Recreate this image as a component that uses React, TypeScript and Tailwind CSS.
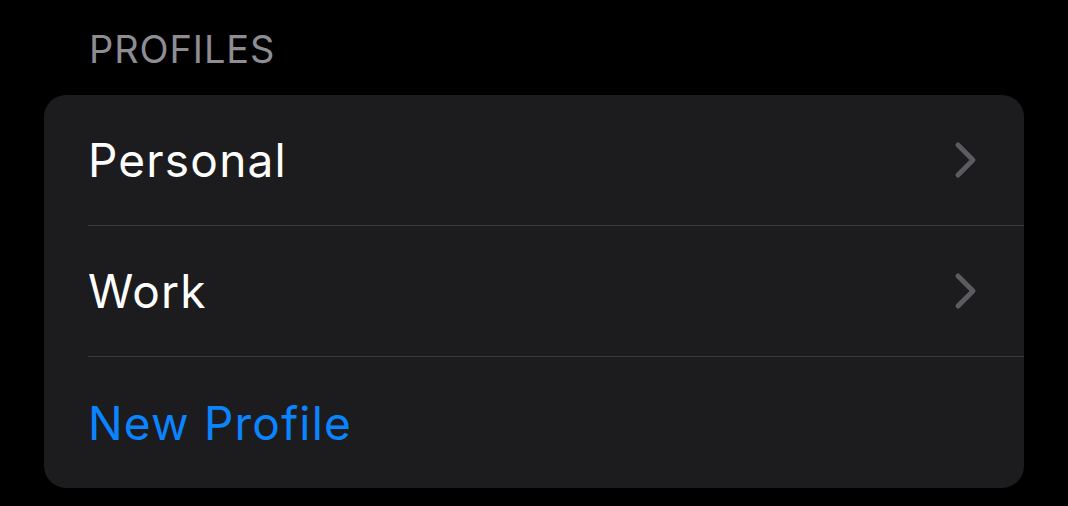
import { ReactNode } from "react"

const rows = [
  { id: "personal", label: "Personal" },
  { id: "work", label: "Work" },
]

function Chevron() {
  return (
    <svg width="24" height="38" viewBox="0 0 24 38" fill="none" className="shrink-0">
      <path d="M4 4 L19 19 L4 34" stroke="#5b5b60" strokeWidth="5" strokeLinecap="round" strokeLinejoin="round" />
    </svg>
  )
}

function Row({ children, divider }: { children: ReactNode; divider?: boolean }) {
  return (
    <div className="pl-[44px]">
      <div className={`flex items-center h-[131px] pr-[46px] ${divider ? "border-b border-[#38383a]" : ""}`}>
        {children}
      </div>
    </div>
  )
}

export default function App() {
  return (
    <div className="w-[1068px] h-[506px] bg-black overflow-hidden font-['Inter',sans-serif]">
      <div className="pt-[27px] pl-[89px] h-[95px]">
        <p className="text-[38px] leading-[44px] text-[#8d8d93] tracking-[0.9px]">PROFILES</p>
      </div>
      <div className="ml-[44px] w-[980px] rounded-[22px] bg-[#1c1c1e] overflow-hidden">
        {rows.map((r) => (
          <Row key={r.id} divider>
            <span className="flex-1 text-[46px] leading-none text-white tracking-[1.2px]">{r.label}</span>
            <Chevron />
          </Row>
        ))}
        <Row>
          <span className="text-[46px] leading-none text-[#0a84ff] tracking-[1.2px]">New Profile</span>
        </Row>
      </div>
    </div>
  )
}
